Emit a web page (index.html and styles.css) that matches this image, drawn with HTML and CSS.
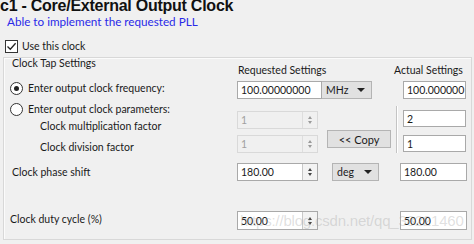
FILE: index.html
```html
<!DOCTYPE html>
<html lang="en">
<head>
    <meta charset="UTF-8">
    <meta name="viewport" content="width=device-width, initial-scale=1.0">
    <title>c1 - Core/External Output Clock</title>
    <link rel="stylesheet" href="styles.css">
</head>
<body>
    <div class="page">
        <h1 class="title">c1 - Core/External Output Clock</h1>
        <div class="status">Able to implement the requested PLL</div>

        <label class="check-row">
            <span class="checkbox">
                <svg width="11" height="11" viewBox="0 0 11 11"><path d="M1.5 5.5 L4.3 8.3 L9.6 2.2" fill="none" stroke="#222" stroke-width="1.3"/></svg>
            </span>
            Use this clock
        </label>

        <div class="group">
            <div class="labels">
                <div class="group-title">Clock Tap Settings</div>
                <div class="radio-row r-freq"><span class="radio checked"></span>Enter output clock frequency:</div>
                <div class="radio-row r-param"><span class="radio"></span>Enter output clock parameters:</div>
                <div class="sub-label r-mult">Clock multiplication factor</div>
                <div class="sub-label r-div">Clock division factor</div>
                <div class="plain-label r-phase">Clock phase shift</div>
                <div class="plain-label r-duty">Clock duty cycle (%)</div>
            </div>

            <div class="settings">
                <div class="head head-req">Requested Settings</div>
                <div class="head head-act">Actual Settings</div>

                <div class="combo freq">
                    <span class="field wide">100.00000000</span>
                    <span class="dropdown unit">MHz <i class="caret"></i></span>
                </div>
                <span class="field actual a-freq">100.000000</span>

                <div class="spin disabled s-mult">
                    <span class="spin-text">1</span>
                    <span class="spin-btn"><i class="up"></i><i class="down"></i></span>
                </div>
                <span class="field actual a-mult">2</span>

                <button class="copy" type="button">&lt;&lt; Copy</button>
                <div class="divider"></div>

                <div class="spin disabled s-div">
                    <span class="spin-text">1</span>
                    <span class="spin-btn"><i class="up"></i><i class="down"></i></span>
                </div>
                <span class="field actual a-div">1</span>

                <div class="spin s-phase">
                    <span class="spin-text">180.00</span>
                    <span class="spin-btn"><i class="up"></i><i class="down"></i></span>
                </div>
                <span class="dropdown deg">deg <i class="caret"></i></span>
                <span class="field actual a-phase">180.00</span>

                <div class="spin s-duty">
                    <span class="spin-text">50.00</span>
                    <span class="spin-btn"><i class="up"></i><i class="down"></i></span>
                </div>
                <span class="field actual a-duty">50.00</span>
            </div>
        </div>

        <div class="watermark">https://blog.csdn.net/qq_38221460</div>
    </div>
</body>
</html>
```

FILE: styles.css
```css
body {
    margin: 0;
    background-color: #f0f0f0;
    font-family: Lato, "Noto Sans", sans-serif;
    font-size: 10.5px;
    color: #1a1a1a;
}
.page {
    position: relative;
    width: 474px;
    height: 244px;
    overflow: hidden;
}
.title {
    margin: -2px 0 0 0;
    font-family: "Liberation Sans", Arial, sans-serif;
    font-size: 16px;
    font-weight: bold;
    line-height: 16px;
    letter-spacing: -0.25px;
    color: #111;
}
.status {
    margin-left: 7px;
    margin-top: 1px;
    line-height: 12px;
    height: 13px;
    font-size: 11.7px;
    color: #2a2ae8;
}
.check-row {
    display: flex;
    align-items: center;
    height: 14px;
    margin-top: 11px;
    margin-left: 5px;
    gap: 4px;
}
.checkbox {
    display: flex;
    align-items: center;
    justify-content: center;
    width: 11px;
    height: 11px;
    border: 1px solid #333;
    background-color: #fff;
}
.group {
    display: flex;
    margin: 4px 2px 0 3px;
    height: 181px;
    border: 1px solid #d8d8d8;
    box-shadow: inset 1px 1px 0 #fbfbfb;
}
.labels {
    width: 233px;
    display: flex;
    flex-direction: column;
}
.labels > div {
    height: 14px;
    line-height: 14px;
    white-space: nowrap;
}
.group-title {
    margin-top: -2px;
    padding-left: 8px;
}
.radio-row {
    display: flex;
    align-items: center;
    gap: 5px;
    padding-left: 6px;
}
.radio {
    width: 11px;
    height: 11px;
    border: 1px solid #333;
    border-radius: 50%;
    background-color: #fff;
    box-sizing: content-box;
    position: relative;
}
.radio.checked::after {
    content: "";
    position: absolute;
    left: 3px;
    top: 3px;
    width: 5px;
    height: 5px;
    border-radius: 50%;
    background-color: #222;
}
.r-freq { margin-top: 11px; }
.r-param { margin-top: 7px; }
.sub-label { padding-left: 36px; }
.r-mult { margin-top: 3px; }
.r-div { margin-top: 7px; }
.plain-label { padding-left: 8px; }
.r-phase { margin-top: 11px; }
.r-duty { margin-top: 33px; padding-left: 6px; }

.settings {
    display: grid;
    grid-template-columns: 81px 78px 4px 67px;
    grid-template-rows: 18px 22px 30px 24px 28px 49px;
    margin-top: 1px;
}
.head {
    align-self: end;
    line-height: 14px;
    white-space: nowrap;
}
.head-req { grid-column: 1 / 3; grid-row: 1; padding-left: 1px; }
.head-act { grid-column: 3 / 5; grid-row: 1; margin-left: -2px; }

.field {
    display: flex;
    align-items: center;
    box-sizing: border-box;
    height: 18px;
    padding-left: 3px;
    background-color: #fff;
    border: 1px solid #a9a9a9;
}
.combo {
    display: flex;
    grid-column: 1 / 3;
    grid-row: 2;
    align-self: end;
}
.wide { width: 85px; }
.dropdown {
    display: flex;
    align-items: center;
    justify-content: space-between;
    box-sizing: border-box;
    height: 18px;
    padding: 0 6px 0 4px;
    background-color: #e1e1e1;
    border: 1px solid #b4b4b4;
}
.unit { width: 50px; border-left: none; }
.caret {
    width: 0;
    height: 0;
    border-left: 4px solid transparent;
    border-right: 4px solid transparent;
    border-top: 4px solid #222;
}
.actual { grid-column: 4; }
.a-freq { grid-row: 2; align-self: end; margin-left: 3px; width: 63px; }
.a-mult { grid-row: 3; align-self: start; margin-top: 11px; height: 17px; margin-left: 3px; width: 63px; }
.a-div { grid-row: 4; align-self: start; margin-top: 6px; height: 17px; margin-left: 3px; width: 63px; }
.a-phase { grid-row: 5; align-self: end; }
.a-duty { grid-row: 6; align-self: end; height: 19px; }

.spin {
    display: flex;
    grid-column: 1;
    box-sizing: border-box;
    height: 18px;
    width: 81px;
    background-color: #fff;
    border: 1px solid #a9a9a9;
}
.spin-text {
    flex: 1;
    display: flex;
    align-items: center;
    padding-left: 3px;
    border-right: 1px solid #c8c8c8;
}
.spin-btn {
    width: 14px;
    display: flex;
    flex-direction: column;
    align-items: center;
    justify-content: center;
    gap: 2px;
    background-color: #f3f3f3;
}
.up, .down {
    width: 0;
    height: 0;
    border-left: 2px solid transparent;
    border-right: 2px solid transparent;
}
.up { border-bottom: 3px solid #444; }
.down { border-top: 3px solid #444; }
.spin.disabled {
    background-color: #f0f0f0;
    border-color: #d9d9d9;
    color: #a0a0a0;
}
.spin.disabled .spin-text { border-right-color: #dedede; }
.spin.disabled .spin-btn { background-color: #f0f0f0; }
.spin.disabled .up { border-bottom-color: #9a9a9a; }
.spin.disabled .down { border-top-color: #9a9a9a; }
.s-mult { grid-row: 3; align-self: start; margin-top: 12px; }
.s-div { grid-row: 4; align-self: start; margin-top: 6px; }
.s-phase { grid-row: 5; align-self: end; }
.s-duty { grid-row: 6; align-self: end; height: 19px; }

.copy {
    grid-column: 2;
    grid-row: 3 / 5;
    align-self: start;
    margin: 31px 0 0 9px;
    width: 64px;
    height: 18px;
    padding: 0;
    font-family: inherit;
    font-size: 11px;
    color: #1a1a1a;
    background-color: #e1e1e1;
    border: 1px solid #b4b4b4;
}
.divider {
    grid-column: 3;
    grid-row: 3 / 5;
    margin: 7px 0 0 0;
    width: 1px;
    background-color: #c4c4c4;
    box-shadow: 1px 0 0 #fff;
}
.deg {
    grid-column: 2;
    grid-row: 5;
    align-self: end;
    width: 47px;
    margin-left: 14px;
}

.watermark {
    position: absolute;
    left: 240px;
    top: 212px;
    font-family: "Liberation Sans", Arial, sans-serif;
    font-size: 15px;
    color: rgba(150, 150, 150, 0.3);
    white-space: nowrap;
    letter-spacing: -0.2px;
}
```
